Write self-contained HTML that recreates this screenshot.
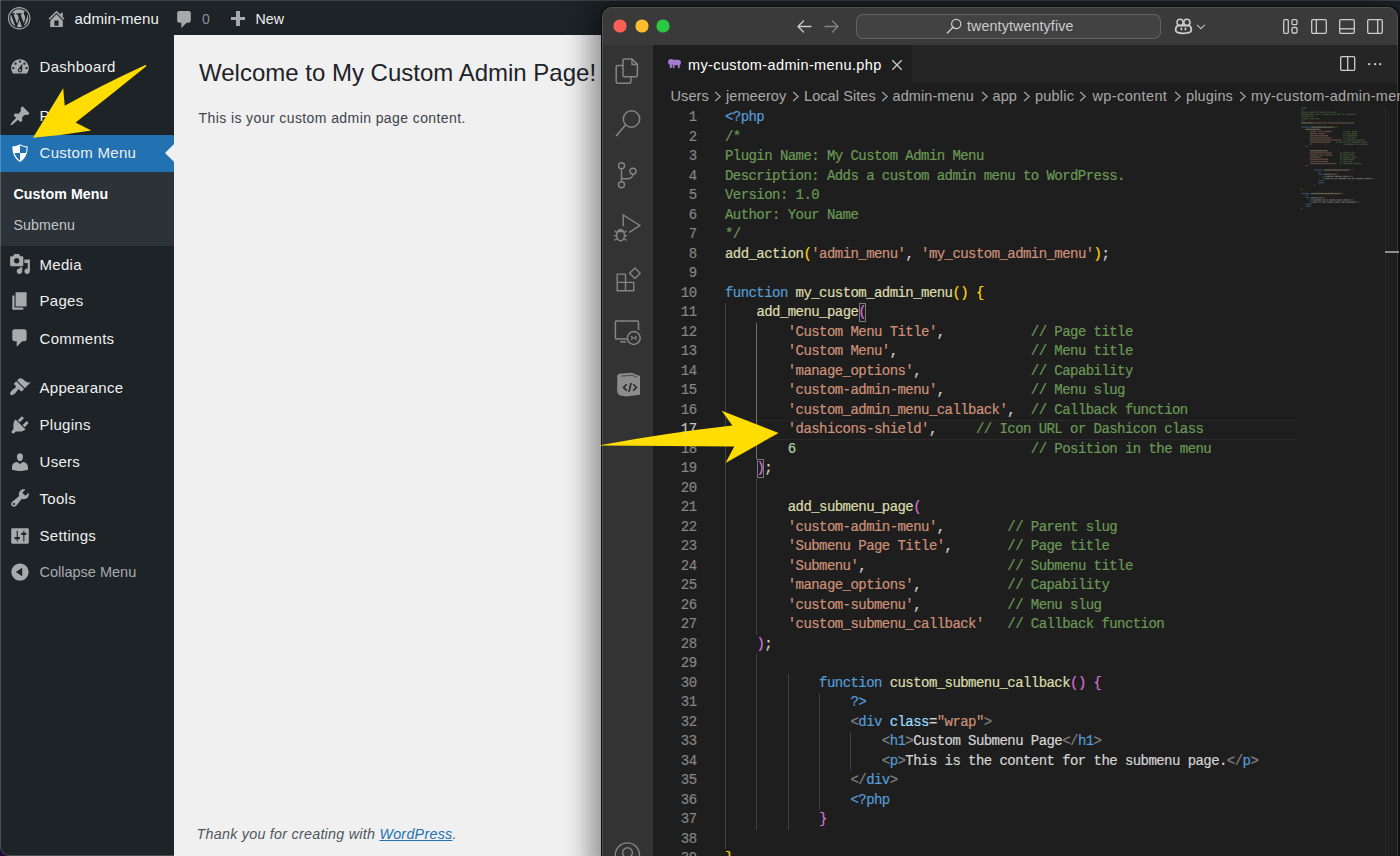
<!DOCTYPE html><html><head><meta charset="utf-8"><style>
*{margin:0;padding:0;box-sizing:border-box}
html,body{width:1400px;height:856px;overflow:hidden;background:#1a0b35;font-family:"Liberation Sans",sans-serif}
.a{position:absolute}
.t{position:absolute;white-space:pre;line-height:1}
svg{position:absolute;overflow:visible}
.code{position:absolute;letter-spacing:-0.56px;-webkit-text-stroke:0.2px currentColor;font-family:"Liberation Mono",monospace;font-size:14px;line-height:19.5px;white-space:pre}
</style></head><body><div class="a" style="left:0;top:0;width:1400px;height:856px;background:#1d2327;border-bottom-left-radius:9px"></div>
<div class="a" style="left:0px;top:0px;width:1400px;height:35px;background:#1d2327;"></div>
<div class="a" style="left:0px;top:0px;width:1400px;height:1px;background:#3d4146;"></div>
<div class="a" style="left:174px;top:35px;width:1226px;height:821px;background:#f0f0f1;"></div>
<div class="t" style="left:74.5px;top:11.30px;font-size:15px;color:#f0f0f1;font-family:'Liberation Sans',sans-serif;letter-spacing:0.1px;font-weight:normal;font-style:normal;">admin-menu</div>
<div class="t" style="left:202px;top:11.75px;font-size:14px;color:#8c8f94;font-family:'Liberation Sans',sans-serif;letter-spacing:0px;font-weight:normal;font-style:normal;">0</div>
<div class="t" style="left:255.5px;top:11.58px;font-size:14.2px;color:#f0f0f1;font-family:'Liberation Sans',sans-serif;letter-spacing:0px;font-weight:normal;font-style:normal;">New</div>
<div class="a" style="left:0px;top:135px;width:174px;height:37px;background:#2271b1;"></div>
<div class="a" style="left:0px;top:172px;width:174px;height:74px;background:#2c3338;"></div>
<svg style="left:165px;top:144.3px" width="9" height="17.8" viewBox="0 0 9 17.8"><path d="M9 0 L0 8.9 L9 17.8Z" fill="#f0f0f1"/></svg>
<div class="t" style="left:39.5px;top:58.80px;font-size:15px;color:#f0f0f1;font-family:'Liberation Sans',sans-serif;letter-spacing:0.3px;font-weight:normal;font-style:normal;">Dashboard</div>
<div class="t" style="left:39.5px;top:108.30px;font-size:15px;color:#f0f0f1;font-family:'Liberation Sans',sans-serif;letter-spacing:0.3px;font-weight:normal;font-style:normal;">Posts</div>
<div class="t" style="left:39.5px;top:145.30px;font-size:15px;color:#f0f0f1;font-family:'Liberation Sans',sans-serif;letter-spacing:0.3px;font-weight:normal;font-style:normal;">Custom Menu</div>
<div class="t" style="left:39.5px;top:256.55px;font-size:15px;color:#f0f0f1;font-family:'Liberation Sans',sans-serif;letter-spacing:0.3px;font-weight:normal;font-style:normal;">Media</div>
<div class="t" style="left:39.5px;top:293.30px;font-size:15px;color:#f0f0f1;font-family:'Liberation Sans',sans-serif;letter-spacing:0.3px;font-weight:normal;font-style:normal;">Pages</div>
<div class="t" style="left:39.5px;top:330.55px;font-size:15px;color:#f0f0f1;font-family:'Liberation Sans',sans-serif;letter-spacing:0.3px;font-weight:normal;font-style:normal;">Comments</div>
<div class="t" style="left:39.5px;top:379.55px;font-size:15px;color:#f0f0f1;font-family:'Liberation Sans',sans-serif;letter-spacing:0.3px;font-weight:normal;font-style:normal;">Appearance</div>
<div class="t" style="left:39.5px;top:416.80px;font-size:15px;color:#f0f0f1;font-family:'Liberation Sans',sans-serif;letter-spacing:0.3px;font-weight:normal;font-style:normal;">Plugins</div>
<div class="t" style="left:39.5px;top:453.80px;font-size:15px;color:#f0f0f1;font-family:'Liberation Sans',sans-serif;letter-spacing:0.3px;font-weight:normal;font-style:normal;">Users</div>
<div class="t" style="left:39.5px;top:490.55px;font-size:15px;color:#f0f0f1;font-family:'Liberation Sans',sans-serif;letter-spacing:0.3px;font-weight:normal;font-style:normal;">Tools</div>
<div class="t" style="left:39.5px;top:528.05px;font-size:15px;color:#f0f0f1;font-family:'Liberation Sans',sans-serif;letter-spacing:0.3px;font-weight:normal;font-style:normal;">Settings</div>
<div class="t" style="left:39.5px;top:565.03px;font-size:14.5px;color:#a7aaad;font-family:'Liberation Sans',sans-serif;letter-spacing:0px;font-weight:normal;font-style:normal;">Collapse Menu</div>
<div class="t" style="left:13.5px;top:186.78px;font-size:14.2px;color:#ffffff;font-family:'Liberation Sans',sans-serif;letter-spacing:0.1px;font-weight:bold;font-style:normal;">Custom Menu</div>
<div class="t" style="left:13.5px;top:218.28px;font-size:14.2px;color:#c3c4c7;font-family:'Liberation Sans',sans-serif;letter-spacing:0.1px;font-weight:normal;font-style:normal;">Submenu</div>
<svg style="left:8.8px;top:55.5px" width="22.00" height="22.00" viewBox="0 0 20 20"><path fill="#a7aaad" fill-rule="evenodd" d="M3.76 16h12.48c1.1-1.37 1.76-3.11 1.76-5 0-4.42-3.58-8-8-8s-8 3.58-8 8c0 1.89.66 3.63 1.76 5zM10 4c.55 0 1 .45 1 1s-.45 1-1 1-1-.45-1-1 .45-1 1-1zM6 6c.55 0 1 .45 1 1s-.45 1-1 1-1-.45-1-1 .45-1 1-1zm8 0c.55 0 1 .45 1 1s-.45 1-1 1-1-.45-1-1 .45-1 1-1zm-5.37 5.55L12 7v6c0 1.1-.9 2-2 2s-2-.9-2-2c0-.57.24-1.08.63-1.45zM4 10c.55 0 1 .45 1 1s-.45 1-1 1-1-.45-1-1 .45-1 1-1zm12 0c.55 0 1 .45 1 1s-.45 1-1 1-1-.45-1-1 .45-1 1-1zm-5 3c0-.55-.45-1-1-1s-1 .45-1 1 .45 1 1 1 1-.45 1-1z"/></svg>
<svg style="left:8.8px;top:105px" width="22.00" height="22.00" viewBox="0 0 20 20"><path fill="#a7aaad" fill-rule="evenodd" d="M10.44 3.02l1.82-1.82 6.36 6.35-1.83 1.82c-1.05-.68-2.48-.57-3.41.36l-.75.75c-.92.93-1.04 2.350-.35 3.41l-1.83 1.82-2.41-2.41-2.8 2.79c-.42.42-3.38 2.71-3.8 2.290s1.86-3.39 2.28-3.810l2.79-2.79L4.1 9.36l1.83-1.82c1.05.69 2.48.57 3.4-.36l.75-.75c.93-.92 1.05-2.35.36-3.41z"/></svg>
<svg style="left:8.8px;top:253.25px" width="22.00" height="22.00" viewBox="0 0 20 20"><path fill="#a7aaad" fill-rule="evenodd" d="M13 11V4c0-.55-.45-1-1-1h-1.67L9 1H5L3.67 3H2c-.55 0-1 .45-1 1v7c0 .55.45 1 1 1h10c.55 0 1-.45 1-1zM7 4.5c1.38 0 2.5 1.12 2.5 2.5S8.38 9.5 7 9.5 4.5 8.38 4.5 7 5.620 4.5 7 4.5zM14 6h5v10.5c0 1.38-1.12 2.5-2.5 2.5S14 17.88 14 16.5s1.12-2.5 2.5-2.5c.17 0 .34.02.5.05V9h-3V6zm-4 8.05V13h2v3.5c0 1.38-1.12 2.5-2.5 2.5S7 17.88 7 16.5 8.12 14 9.5 14c.17 0 .34.02.5.05z"/></svg>
<svg style="left:8.8px;top:290px" width="22.00" height="22.00" viewBox="0 0 20 20"><path fill="#a7aaad" fill-rule="evenodd" d="M6 15V2h10v13H6zm-1 1h8v2H3V5h2v11z"/></svg>
<svg style="left:8.8px;top:327.25px" width="22.00" height="22.00" viewBox="0 0 20 20"><path fill="#a7aaad" fill-rule="evenodd" d="M5 2h9c1.1 0 2 .9 2 2v7c0 1.1-.9 2-2 2h-2l-5 5v-5H5c-1.1 0-2-.9-2-2V4c0-1.1.9-2 2-2z"/></svg>
<svg style="left:8.8px;top:376.25px" width="22.00" height="22.00" viewBox="0 0 20 20"><path fill="#a7aaad" fill-rule="evenodd" d="M14.48 11.06L7.41 3.99l1.5-1.5c.5-.56 2.3-.47 3.51.32 1.21.8 1.430 1.28 2.91 2.1 1.18.64 2.45 1.26 4.45.85zm-.71.71L6.7 4.7 4.93 6.47c-.39.39-.39 1.02 0 1.41l1.06 1.06c.39.39.39 1.03 0 1.42-.6.6-1.43 1.11-2.21 1.69-.35.26-.7.53-1.01.84C1.43 14.23.4 16.08 1.4 17.07c.99 1 2.84-.03 4.18-1.36.31-.31.58-.66.85-1.02.57-.78 1.08-1.61 1.69-2.21.39-.39 1.02-.39 1.41 0l1.06 1.06c.39.39 1.02.39 1.41 0z"/></svg>
<svg style="left:8.8px;top:413.5px" width="22.00" height="22.00" viewBox="0 0 20 20"><path fill="#a7aaad" fill-rule="evenodd" d="M13.11 4.36L9.87 7.6 8 5.73l3.24-3.24c.35-.34 1.05-.2 1.56.32.52.51.66 1.21.31 1.55zm-8 1.77l.91-1.12 9.01 9.01-1.19.84c-.71.71-2.63 1.16-3.82 1.16H6.14L4.9 17.26c-.59.59-1.54.59-2.12 0-.59-.58-.59-1.53 0-2.12l1.24-1.24v-3.88c0-1.13.4-3.19 1.09-3.890zm7.26 3.97l3.24-3.24c.34-.35 1.04-.21 1.55.31.52.51.66 1.21.31 1.55l-3.24 3.25z"/></svg>
<svg style="left:8.8px;top:450.5px" width="22.00" height="22.00" viewBox="0 0 20 20"><path fill="#a7aaad" fill-rule="evenodd" d="M10 9.25c-2.27 0-2.73-3.44-2.73-3.44C7 4.02 7.820 2 9.97 2c2.16 0 2.98 2.02 2.71 3.81 0 0-.41 3.44-2.68 3.44zm0 2.57L12.72 10c2.39 0 4.52 2.33 4.52 4.53v2.49s-3.65 1.13-7.24 1.13c-3.65 0-7.24-1.13-7.24-1.13v-2.49c0-2.25 1.94-4.48 4.47-4.48z"/></svg>
<svg style="left:8.8px;top:487.25px" width="22.00" height="22.00" viewBox="0 0 20 20"><path fill="#a7aaad" fill-rule="evenodd" d="M16.68 9.77c-1.34 1.34-3.3 1.67-4.95.99l-5.41 6.52c-.99.99-2.59.99-3.58 0s-.99-2.59 0-3.57l6.52-5.42c-.68-1.65-.35-3.61.99-4.95 1.28-1.28 3.12-1.62 4.72-1.06l-2.89 2.89 2.82 2.82 2.86-2.87c.53 1.58.18 3.39-1.08 4.650zM3.81 16.21c.4.39 1.04.39 1.43 0 .4-.4.4-1.04 0-1.43-.39-.4-1.03-.4-1.43 0-.39.39-.39 1.03 0 1.43z"/></svg>
<svg style="left:8.8px;top:524.75px" width="22.00" height="22.00" viewBox="0 0 20 20"><path fill="#a7aaad" fill-rule="evenodd" d="M18 16V4c0-.55-.45-1-1-1H3c-.55 0-1 .45-1 1v12c0 .55.45 1 1 1h14c.55 0 1-.45 1-1zM8 11h1c.55 0 1 .45 1 1s-.45 1-1 1H8v1.5c0 .28-.22.5-.5.5s-.5-.22-.5-.5V13H6c-.55 0-1-.45-1-1s.45-1 1-1h1V5.5c0-.28.22-.5.5-.5s.5.22.5.5V11zm5-2h-1c-.55 0-1-.45-1-1s.45-1 1-1h1V5.5c0-.28.22-.5.5-.5s.5.22.5.5V7h1c.55 0 1 .45 1 1s-.45 1-1 1h-1v5.5c0 .28-.22.5-.5.5s-.5-.22-.5-.5V9z"/></svg>
<svg style="left:8.8px;top:560.5px" width="22.00" height="22.00" viewBox="0 0 20 20"><path fill="#a7aaad" fill-rule="evenodd" d="M10 2.16c4.33 0 7.84 3.51 7.84 7.84S14.33 17.84 10 17.84 2.16 14.33 2.16 10 5.710 2.16 10 2.16zm2 11.72V6.12L6.18 9.97z"/></svg>
<svg style="left:8.8px;top:142.4px" width="22.00" height="22.00" viewBox="0 0 20 20"><path fill="#ffffff" fill-rule="evenodd" d="M10 2s3 2 7 2c0 11-7 14-7 14S3 15 3 4c4 0 7-2 7-2zm0 8h5s1-1 1-5c0 0-5-1-6-2v7zm-5 0c1 4 5 7 5 7v-7H5z"/></svg>
<svg style="left:46.2px;top:7.5px" width="21.00" height="21.00" viewBox="0 0 20 20"><path fill="#a7aaad" fill-rule="evenodd" d="M16 8.5l1.53 1.53-1.06 1.06L10 4.62l-6.47 6.47-1.06-1.06L10 2.5l4 4v-2h2v4zm-6-2.46l6 5.99V18H4v-5.97zM12 17v-5H8v5h4z"/></svg>
<svg style="left:173.6px;top:8.6px" width="21.00" height="21.00" viewBox="0 0 20 20"><path fill="#a7aaad" fill-rule="evenodd" d="M5 2h9c1.1 0 2 .9 2 2v7c0 1.1-.9 2-2 2h-2l-5 5v-5H5c-1.1 0-2-.9-2-2V4c0-1.1.9-2 2-2z"/></svg>
<div class="a" style="left:236.3px;top:11.3px;width:3.5px;height:14.4px;background:#a7aaad;"></div>
<div class="a" style="left:230.9px;top:16.7px;width:14.2px;height:3.5px;background:#a7aaad;"></div>
<svg style="left:7.5px;top:6.75px" width="22.50" height="22.50" viewBox="0 0 20 20"><path fill="#a7aaad" fill-rule="nonzero" d="M20 10c0-5.52-4.48-10-10-10S0 4.48 0 10s4.48 10 10 10 10-4.48 10-10zM10 1.01c4.96 0 8.99 4.02 8.99 8.99s-4.03 8.99-8.99 8.99S1.01 14.96 1.01 10 5.04 1.01 10 1.01zM8.01 14.82L4.96 6.61c.49-.03 1.05-.08 1.05-.08.43-.05.38-1.01-.06-.99 0 0-1.29.1-2.13.1-.15 0-.33 0-.52-.01 1.44-2.17 3.9-3.6 6.7-3.6 2.09 0 3.99.79 5.410 2.09-.6-.08-1.45.35-1.45 1.49 0 .7.38 1.29.78 1.99.31.55.5 1.22.5 2.21 0 1.34-1.27 4.48-1.27 4.48l-2.71-7.5c.48-.03.75-.16.75-.16.43-.05.38-1.1-.05-1.08 0 0-1.3.11-2.14.11-.78 0-2.11-.11-2.11-.11-.43-.02-.48 1.06-.04 1.08l.84.08 1.12 3.04zm6.02 2.15L16.64 10s.67-1.69.39-3.81c.63 1.14.94 2.42.94 3.81 0 2.96-1.56 5.58-3.94 6.97zM2.68 6.77L6.5 17.25c-2.67-1.3-4.470-4.08-4.47-7.25 0-1.16.2-2.23.65-3.23zm7.45 4.53l2.29 6.25c-.75.27-1.57.42-2.42.42-.72 0-1.41-.11-2.06-.3z"/></svg>
<div class="a" style="left:0;top:0;width:1400px;height:856px;border-left:1.5px solid rgba(255,255,255,0.2);border-bottom:1px solid rgba(255,255,255,0.2);border-bottom-left-radius:9px"></div>
<div class="t" style="left:199px;top:60.68px;font-size:24px;color:#1d2327;font-family:'Liberation Sans',sans-serif;letter-spacing:0px;font-weight:normal;font-style:normal;">Welcome to My Custom Admin Page!</div>
<div class="t" style="left:198.5px;top:110.90px;font-size:14px;color:#3c434a;font-family:'Liberation Sans',sans-serif;letter-spacing:0.41px;font-weight:normal;font-style:normal;">This is your custom admin page content.</div>
<div class="t" style="left:196.5px;top:827.30px;font-size:14.3px;color:#50575e;font-family:'Liberation Sans',sans-serif;letter-spacing:0.26px;font-weight:normal;font-style:italic;">Thank you for creating with <span style="color:#2271b1;text-decoration:underline">WordPress</span>.</div>
<div class="a" style="left:601px;top:6px;width:798.5px;height:900px;border-radius:11px 11px 0 0;box-shadow:-6px 0 28px 4px rgba(0,0,0,.42);background:#0e0e0e"></div>
<div class="a" style="left:602px;top:7px;width:796px;height:900px;border-radius:10px 10px 0 0;background:#1e1e1e;overflow:hidden">
<div class="a" style="left:0px;top:0px;width:800px;height:38px;background:#3a3a3a;"></div>
<div class="a" style="left:0px;top:38px;width:51px;height:820px;background:#333333;"></div>
<div class="a" style="left:51px;top:38px;width:750px;height:38px;background:#252526;"></div>
<div class="a" style="left:51px;top:38px;width:259px;height:38px;background:#1e1e1e;"></div>
</div>
<div class="a" style="left:602px;top:7px;width:796px;height:900px;border-radius:10px 10px 0 0;border:1px solid rgba(255,255,255,0.12)"></div>
<div class="a" style="left:1399.5px;top:0px;width:1px;height:856px;background:#1d2327;"></div>
<svg style="left:612.9px;top:18.5px" width="14" height="14" viewBox="0 0 14 14"><circle cx="7" cy="7" r="6.6" fill="#ff5f57"/></svg>
<svg style="left:634.5px;top:18.5px" width="14" height="14" viewBox="0 0 14 14"><circle cx="7" cy="7" r="6.6" fill="#febc2e"/></svg>
<svg style="left:656.3px;top:18.5px" width="14" height="14" viewBox="0 0 14 14"><circle cx="7" cy="7" r="6.6" fill="#28c840"/></svg>
<svg style="left:796px;top:20px" width="16" height="13" viewBox="0 0 16 13"><path d="M15 6.5H2M7.5 1L2 6.5 7.5 12" fill="none" stroke="#cccccc" stroke-width="1.3" stroke-linecap="round" stroke-linejoin="round"/></svg>
<svg style="left:824px;top:20px" width="16" height="13" viewBox="0 0 16 13"><path d="M1 6.5H14M8.5 1L14 6.5 8.5 12" fill="none" stroke="#858585" stroke-width="1.3" stroke-linecap="round" stroke-linejoin="round"/></svg>
<div class="a" style="left:855.5px;top:13.5px;width:305px;height:25.5px;background:rgba(255,255,255,0.045);border:1px solid rgba(255,255,255,0.17);border-radius:7px"></div>
<svg style="left:946px;top:18px" width="16" height="16" viewBox="0 0 16 16"><circle cx="10.2" cy="6" r="4.6" fill="none" stroke="#cccccc" stroke-width="1.25"/><path d="M7 9.3L1.3 15" stroke="#cccccc" stroke-width="1.3" stroke-linecap="round"/></svg>
<div class="t" style="left:967px;top:18.98px;font-size:14.2px;color:#cccccc;font-family:'Liberation Sans',sans-serif;letter-spacing:0.15px;font-weight:normal;font-style:normal;">twentytwentyfive</div>
<svg style="left:1170px;top:14px" width="40" height="24" viewBox="0 0 40 24"><circle cx="10.1" cy="8.4" r="3.1" fill="none" stroke="#cccccc" stroke-width="1.5"/><circle cx="16.9" cy="8.4" r="3.1" fill="none" stroke="#cccccc" stroke-width="1.5"/><path d="M5.7 16.3Q5.5 12.2 8.6 11.7H18.4Q21.5 12.2 21.3 16.3Q21.2 19.3 13.5 19.3Q5.8 19.3 5.7 16.3Z" fill="none" stroke="#cccccc" stroke-width="1.8"/><ellipse cx="11.4" cy="14.9" rx="0.9" ry="1.7" fill="#cccccc"/><ellipse cx="15.4" cy="14.9" rx="0.9" ry="1.7" fill="#cccccc"/></svg>
<svg style="left:1196px;top:24px" width="10" height="6" viewBox="0 0 10 6"><path d="M1 .8l3.9 3.9 3.9-3.9" fill="none" stroke="#bbbbbb" stroke-width="1.1"/></svg>
<svg style="left:1283px;top:19px" width="16" height="15" viewBox="0 0 16 15"><rect x="0.7" y="0.7" width="4.6" height="13.6" rx="1" fill="none" stroke="#cccccc" stroke-width="1.3"/><rect x="9" y="0.7" width="5" height="5" rx="1.2" fill="none" stroke="#cccccc" stroke-width="1.3"/><rect x="9" y="8.5" width="5" height="5.5" rx="1.2" fill="none" stroke="#cccccc" stroke-width="1.3"/></svg>
<svg style="left:1311px;top:19px" width="16" height="15" viewBox="0 0 16 15"><rect x="0.7" y="0.7" width="14.6" height="13.6" rx="1.2" fill="none" stroke="#cccccc" stroke-width="1.3"/><path d="M5.3 .7v13.6" stroke="#cccccc" stroke-width="1.3"/></svg>
<svg style="left:1339px;top:19px" width="16" height="15" viewBox="0 0 16 15"><rect x="0.7" y="0.7" width="14.6" height="13.6" rx="1.2" fill="none" stroke="#cccccc" stroke-width="1.3"/><path d="M.7 9.8h14.6" stroke="#cccccc" stroke-width="1.3"/></svg>
<svg style="left:1367px;top:19px" width="16" height="15" viewBox="0 0 16 15"><rect x="0.7" y="0.7" width="14.6" height="13.6" rx="1.2" fill="none" stroke="#cccccc" stroke-width="1.3"/><path d="M10.7 .7v13.6" stroke="#cccccc" stroke-width="1.3"/></svg>
<svg style="left:614px;top:57px" width="26" height="28" viewBox="0 0 26 28"><path d="M10.5 2H18L23.4 7.4V18.3A1.5 1.5 0 0 1 21.9 19.8H10.5A1.5 1.5 0 0 1 9 18.3V3.5A1.5 1.5 0 0 1 10.5 2ZM18 2V7.4H23.4" fill="none" stroke="#858585" stroke-width="1.5" stroke-linejoin="round"/><path d="M9 8.5H3.7A1.5 1.5 0 0 0 2.2 10V24.8A1.5 1.5 0 0 0 3.7 26.3H15.4A1.5 1.5 0 0 0 16.9 24.8V19.8" fill="none" stroke="#858585" stroke-width="1.5" stroke-linejoin="round"/></svg>
<svg style="left:614px;top:108px" width="28" height="30" viewBox="0 0 28 30"><circle cx="17.5" cy="11" r="8.2" fill="none" stroke="#858585" stroke-width="1.5"/><path d="M11.5 17L2.5 27.5" stroke="#858585" stroke-width="1.6" stroke-linecap="round"/></svg>
<svg style="left:615px;top:161px" width="26" height="30" viewBox="0 0 26 30"><circle cx="6.5" cy="4.8" r="3" fill="none" stroke="#858585" stroke-width="1.4"/><circle cx="18" cy="10.3" r="3" fill="none" stroke="#858585" stroke-width="1.4"/><circle cx="6.5" cy="23.7" r="3" fill="none" stroke="#858585" stroke-width="1.4"/><path d="M6.5 7.8v12.9M18 13.3c0 3-3 4.5-6 4.5H6.5" fill="none" stroke="#858585" stroke-width="1.4"/></svg>
<svg style="left:608px;top:208px" width="36" height="36" viewBox="0 0 36 36"><path d="M15.2 18.2V7L31.8 17.5 21.3 24.3" fill="none" stroke="#858585" stroke-width="1.4" stroke-linejoin="miter"/><ellipse cx="12.6" cy="27.6" rx="3.9" ry="5.1" fill="none" stroke="#858585" stroke-width="1.4"/><path d="M8.9 23.6H16.3M9.6 23.3Q12.6 19.6 15.6 23.3M8.8 24.8L6.6 22.6M8.7 27.6H6M8.8 30.6L6.6 32.6M16.4 24.8L18.6 22.6M16.5 27.6H19.2M16.4 30.6L18.6 32.6" fill="none" stroke="#858585" stroke-width="1.3"/></svg>
<svg style="left:615px;top:262px" width="28" height="32" viewBox="0 0 28 32"><path d="M2.2 12.1h8.3v8.3H2.2zM2.2 20.4h8.3v8.3H2.2zM10.5 20.4h8.3v8.3h-8.3z" fill="none" stroke="#858585" stroke-width="1.4" stroke-linejoin="round"/><path d="M14.6 11.2l5.3-5.3 5.3 5.3-5.3 5.3z" fill="none" stroke="#858585" stroke-width="1.4" stroke-linejoin="round"/></svg>
<svg style="left:613px;top:319px" width="30" height="28" viewBox="0 0 30 28"><path d="M14.5 20H3.4A1 1 0 0 1 2.4 19V3A1 1 0 0 1 3.4 2H24.5A1 1 0 0 1 25.5 3V11" fill="none" stroke="#858585" stroke-width="1.5"/><path d="M7.1 22.8h6" stroke="#858585" stroke-width="1.5"/><circle cx="20.8" cy="19" r="6.4" fill="#333333" stroke="#858585" stroke-width="1.5"/><path d="M18 17.3l2 1.7-2 1.7M23.6 17.3l-2 1.7 2 1.7" fill="none" stroke="#858585" stroke-width="1.2"/></svg>
<svg style="left:616px;top:372px" width="26" height="28" viewBox="0 0 26 28"><path d="M1.2 3.8L3 1.8 15.5 .8 24 4V22.8L10 24.6 3.2 23.2 1.2 20z" fill="#8c8c8c"/><path d="M5 4.2L16 3.2 21 5.2" fill="none" stroke="#555555" stroke-width="1.2"/><path d="M10.8 12.2l-3.3 3.2 3.3 3.2M17.2 12.2l3.3 3.2-3.3 3.2M15.1 11l-2.2 9" fill="none" stroke="#2a2a2a" stroke-width="1.6"/></svg>
<svg style="left:613px;top:840px" width="30" height="30" viewBox="0 0 30 30"><circle cx="14.4" cy="15" r="12.1" fill="none" stroke="#858585" stroke-width="1.4"/><circle cx="14.5" cy="12.7" r="4.9" fill="none" stroke="#858585" stroke-width="1.4"/></svg>
<svg style="left:664px;top:55px" width="22" height="18" viewBox="0 0 22 18"><g fill="#a47bd0"><ellipse cx="7.2" cy="6.9" rx="3.2" ry="2.9"/><rect x="8.5" y="4.7" width="8.4" height="5.6" rx="2.6"/><rect x="5.8" y="8" width="2.1" height="5.2" rx="1"/><rect x="8.7" y="9" width="1.8" height="4.3" rx="0.8"/><rect x="13.9" y="9" width="1.8" height="4.3" rx="0.8"/></g></svg>
<div class="t" style="left:688px;top:57.93px;font-size:14.5px;color:#ffffff;font-family:'Liberation Sans',sans-serif;letter-spacing:0.38px;font-weight:normal;font-style:normal;">my-custom-admin-menu.php</div>
<svg style="left:891px;top:59px" width="12" height="12" viewBox="0 0 12 12"><path d="M1.3 1.3l9.4 9.4M10.7 1.3l-9.4 9.4" stroke="#cccccc" stroke-width="1.25"/></svg>
<svg style="left:1340px;top:56px" width="16" height="15" viewBox="0 0 16 15"><rect x="0.7" y="0.7" width="14" height="13.6" rx="1.2" fill="none" stroke="#cccccc" stroke-width="1.3"/><path d="M7.7 .7v13.6" stroke="#cccccc" stroke-width="1.3"/></svg>
<svg style="left:1368.3px;top:63px" width="2.4" height="2.4" viewBox="0 0 2.4 2.4"><circle cx="1.2" cy="1.2" r="1.15" fill="#cccccc"/></svg>
<svg style="left:1373.8px;top:63px" width="2.4" height="2.4" viewBox="0 0 2.4 2.4"><circle cx="1.2" cy="1.2" r="1.15" fill="#cccccc"/></svg>
<svg style="left:1379.3px;top:63px" width="2.4" height="2.4" viewBox="0 0 2.4 2.4"><circle cx="1.2" cy="1.2" r="1.15" fill="#cccccc"/></svg>
<div class="t" style="left:670.5px;top:88.63px;font-size:14.5px;color:#a9a9a9;font-family:'Liberation Sans',sans-serif;letter-spacing:0.08px;font-weight:normal;font-style:normal;">Users</div>
<div class="t" style="left:726px;top:88.63px;font-size:14.5px;color:#a9a9a9;font-family:'Liberation Sans',sans-serif;letter-spacing:0.08px;font-weight:normal;font-style:normal;">jemeeroy</div>
<div class="t" style="left:804px;top:88.63px;font-size:14.5px;color:#a9a9a9;font-family:'Liberation Sans',sans-serif;letter-spacing:0.08px;font-weight:normal;font-style:normal;">Local Sites</div>
<div class="t" style="left:892.5px;top:88.63px;font-size:14.5px;color:#a9a9a9;font-family:'Liberation Sans',sans-serif;letter-spacing:0.08px;font-weight:normal;font-style:normal;">admin-menu</div>
<div class="t" style="left:992.5px;top:88.63px;font-size:14.5px;color:#a9a9a9;font-family:'Liberation Sans',sans-serif;letter-spacing:0.08px;font-weight:normal;font-style:normal;">app</div>
<div class="t" style="left:1035px;top:88.63px;font-size:14.5px;color:#a9a9a9;font-family:'Liberation Sans',sans-serif;letter-spacing:0.2px;font-weight:normal;font-style:normal;">public</div>
<div class="t" style="left:1092.5px;top:88.63px;font-size:14.5px;color:#a9a9a9;font-family:'Liberation Sans',sans-serif;letter-spacing:0.38px;font-weight:normal;font-style:normal;">wp-content</div>
<div class="t" style="left:1186px;top:88.63px;font-size:14.5px;color:#a9a9a9;font-family:'Liberation Sans',sans-serif;letter-spacing:0.15px;font-weight:normal;font-style:normal;">plugins</div>
<div class="t" style="left:1251px;top:88.63px;font-size:14.5px;color:#a9a9a9;font-family:'Liberation Sans',sans-serif;letter-spacing:0.3px;font-weight:normal;font-style:normal;">my-custom-admin-menu.php</div>
<svg style="left:713.8000000000001px;top:90.5px" width="8" height="11" viewBox="0 0 8 11"><path d="M1.2 1l5 4.5-5 4.5" fill="none" stroke="#a9a9a9" stroke-width="1.1"/></svg>
<svg style="left:791.7px;top:90.5px" width="8" height="11" viewBox="0 0 8 11"><path d="M1.2 1l5 4.5-5 4.5" fill="none" stroke="#a9a9a9" stroke-width="1.1"/></svg>
<svg style="left:880.6px;top:90.5px" width="8" height="11" viewBox="0 0 8 11"><path d="M1.2 1l5 4.5-5 4.5" fill="none" stroke="#a9a9a9" stroke-width="1.1"/></svg>
<svg style="left:981.2px;top:90.5px" width="8" height="11" viewBox="0 0 8 11"><path d="M1.2 1l5 4.5-5 4.5" fill="none" stroke="#a9a9a9" stroke-width="1.1"/></svg>
<svg style="left:1022.9000000000001px;top:90.5px" width="8" height="11" viewBox="0 0 8 11"><path d="M1.2 1l5 4.5-5 4.5" fill="none" stroke="#a9a9a9" stroke-width="1.1"/></svg>
<svg style="left:1079.2px;top:90.5px" width="8" height="11" viewBox="0 0 8 11"><path d="M1.2 1l5 4.5-5 4.5" fill="none" stroke="#a9a9a9" stroke-width="1.1"/></svg>
<svg style="left:1174.2px;top:90.5px" width="8" height="11" viewBox="0 0 8 11"><path d="M1.2 1l5 4.5-5 4.5" fill="none" stroke="#a9a9a9" stroke-width="1.1"/></svg>
<svg style="left:1239.2px;top:90.5px" width="8" height="11" viewBox="0 0 8 11"><path d="M1.2 1l5 4.5-5 4.5" fill="none" stroke="#a9a9a9" stroke-width="1.1"/></svg>
<div class="a" style="left:725px;top:419.5px;width:572px;height:1.5px;background:#292929;"></div>
<div class="a" style="left:725px;top:438.5px;width:572px;height:1.5px;background:#292929;"></div>
<div class="a" style="left:724.8px;top:303.0px;width:1px;height:546.0px;background:#404040;"></div>
<div class="a" style="left:756.2px;top:322.5px;width:1px;height:136.5px;background:#707070;"></div>
<div class="a" style="left:756.2px;top:478.5px;width:1px;height:156.0px;background:#404040;"></div>
<div class="a" style="left:756.2px;top:654.0px;width:1px;height:175.5px;background:#404040;"></div>
<div class="a" style="left:787.5px;top:673.5px;width:1px;height:156.0px;background:#404040;"></div>
<div class="a" style="left:818.9px;top:693.0px;width:1px;height:117.0px;background:#404040;"></div>
<div class="a" style="left:850.2px;top:732.0px;width:1px;height:39.0px;background:#404040;"></div>
<div class="a" style="left:858.78px;top:303.3px;width:7.6px;height:19px;background:transparent;border:1px solid #7a7a7a"></div>
<div class="a" style="left:756.86px;top:459.3px;width:7.6px;height:19px;background:transparent;border:1px solid #7a7a7a"></div>
<div class="code" style="left:650px;top:108.00px;width:46.5px;text-align:right;color:#858585">1</div>
<div class="code" style="left:650px;top:127.50px;width:46.5px;text-align:right;color:#858585">2</div>
<div class="code" style="left:650px;top:147.00px;width:46.5px;text-align:right;color:#858585">3</div>
<div class="code" style="left:650px;top:166.50px;width:46.5px;text-align:right;color:#858585">4</div>
<div class="code" style="left:650px;top:186.00px;width:46.5px;text-align:right;color:#858585">5</div>
<div class="code" style="left:650px;top:205.50px;width:46.5px;text-align:right;color:#858585">6</div>
<div class="code" style="left:650px;top:225.00px;width:46.5px;text-align:right;color:#858585">7</div>
<div class="code" style="left:650px;top:244.50px;width:46.5px;text-align:right;color:#858585">8</div>
<div class="code" style="left:650px;top:264.00px;width:46.5px;text-align:right;color:#858585">9</div>
<div class="code" style="left:650px;top:283.50px;width:46.5px;text-align:right;color:#858585">10</div>
<div class="code" style="left:650px;top:303.00px;width:46.5px;text-align:right;color:#858585">11</div>
<div class="code" style="left:650px;top:322.50px;width:46.5px;text-align:right;color:#858585">12</div>
<div class="code" style="left:650px;top:342.00px;width:46.5px;text-align:right;color:#858585">13</div>
<div class="code" style="left:650px;top:361.50px;width:46.5px;text-align:right;color:#858585">14</div>
<div class="code" style="left:650px;top:381.00px;width:46.5px;text-align:right;color:#858585">15</div>
<div class="code" style="left:650px;top:400.50px;width:46.5px;text-align:right;color:#858585">16</div>
<div class="code" style="left:650px;top:420.00px;width:46.5px;text-align:right;color:#c6c6c6">17</div>
<div class="code" style="left:650px;top:439.50px;width:46.5px;text-align:right;color:#858585">18</div>
<div class="code" style="left:650px;top:459.00px;width:46.5px;text-align:right;color:#858585">19</div>
<div class="code" style="left:650px;top:478.50px;width:46.5px;text-align:right;color:#858585">20</div>
<div class="code" style="left:650px;top:498.00px;width:46.5px;text-align:right;color:#858585">21</div>
<div class="code" style="left:650px;top:517.50px;width:46.5px;text-align:right;color:#858585">22</div>
<div class="code" style="left:650px;top:537.00px;width:46.5px;text-align:right;color:#858585">23</div>
<div class="code" style="left:650px;top:556.50px;width:46.5px;text-align:right;color:#858585">24</div>
<div class="code" style="left:650px;top:576.00px;width:46.5px;text-align:right;color:#858585">25</div>
<div class="code" style="left:650px;top:595.50px;width:46.5px;text-align:right;color:#858585">26</div>
<div class="code" style="left:650px;top:615.00px;width:46.5px;text-align:right;color:#858585">27</div>
<div class="code" style="left:650px;top:634.50px;width:46.5px;text-align:right;color:#858585">28</div>
<div class="code" style="left:650px;top:654.00px;width:46.5px;text-align:right;color:#858585">29</div>
<div class="code" style="left:650px;top:673.50px;width:46.5px;text-align:right;color:#858585">30</div>
<div class="code" style="left:650px;top:693.00px;width:46.5px;text-align:right;color:#858585">31</div>
<div class="code" style="left:650px;top:712.50px;width:46.5px;text-align:right;color:#858585">32</div>
<div class="code" style="left:650px;top:732.00px;width:46.5px;text-align:right;color:#858585">33</div>
<div class="code" style="left:650px;top:751.50px;width:46.5px;text-align:right;color:#858585">34</div>
<div class="code" style="left:650px;top:771.00px;width:46.5px;text-align:right;color:#858585">35</div>
<div class="code" style="left:650px;top:790.50px;width:46.5px;text-align:right;color:#858585">36</div>
<div class="code" style="left:650px;top:810.00px;width:46.5px;text-align:right;color:#858585">37</div>
<div class="code" style="left:650px;top:829.50px;width:46.5px;text-align:right;color:#858585">38</div>
<div class="code" style="left:650px;top:849.00px;width:46.5px;text-align:right;color:#858585">39</div>
<div class="code" style="left:725px;top:108.00px"><span style="color:#569cd6">&lt;?php</span></div>
<div class="code" style="left:725px;top:127.50px"><span style="color:#6a9955">/*</span></div>
<div class="code" style="left:725px;top:147.00px"><span style="color:#6a9955">Plugin Name: My Custom Admin Menu</span></div>
<div class="code" style="left:725px;top:166.50px"><span style="color:#6a9955">Description: Adds a custom admin menu to WordPress.</span></div>
<div class="code" style="left:725px;top:186.00px"><span style="color:#6a9955">Version: 1.0</span></div>
<div class="code" style="left:725px;top:205.50px"><span style="color:#6a9955">Author: Your Name</span></div>
<div class="code" style="left:725px;top:225.00px"><span style="color:#6a9955">*/</span></div>
<div class="code" style="left:725px;top:244.50px"><span style="color:#dcdcaa">add_action</span><span style="color:#ffd700">(</span><span style="color:#ce9178">&#x27;admin_menu&#x27;</span><span style="color:#d4d4d4">, </span><span style="color:#ce9178">&#x27;my_custom_admin_menu&#x27;</span><span style="color:#ffd700">)</span><span style="color:#d4d4d4">;</span></div>
<div class="code" style="left:725px;top:264.00px"></div>
<div class="code" style="left:725px;top:283.50px"><span style="color:#569cd6">function</span><span style="color:#d4d4d4"> </span><span style="color:#dcdcaa">my_custom_admin_menu</span><span style="color:#ffd700">()</span><span style="color:#d4d4d4"> </span><span style="color:#ffd700">{</span></div>
<div class="code" style="left:725px;top:303.00px"><span style="color:#d4d4d4">    </span><span style="color:#dcdcaa">add_menu_page</span><span style="color:#da70d6">(</span></div>
<div class="code" style="left:725px;top:322.50px"><span style="color:#d4d4d4">        </span><span style="color:#ce9178">&#x27;Custom Menu Title&#x27;</span><span style="color:#d4d4d4">,</span><span style="color:#d4d4d4">           </span><span style="color:#6a9955">// Page title</span></div>
<div class="code" style="left:725px;top:342.00px"><span style="color:#d4d4d4">        </span><span style="color:#ce9178">&#x27;Custom Menu&#x27;</span><span style="color:#d4d4d4">,</span><span style="color:#d4d4d4">                 </span><span style="color:#6a9955">// Menu title</span></div>
<div class="code" style="left:725px;top:361.50px"><span style="color:#d4d4d4">        </span><span style="color:#ce9178">&#x27;manage_options&#x27;</span><span style="color:#d4d4d4">,</span><span style="color:#d4d4d4">              </span><span style="color:#6a9955">// Capability</span></div>
<div class="code" style="left:725px;top:381.00px"><span style="color:#d4d4d4">        </span><span style="color:#ce9178">&#x27;custom-admin-menu&#x27;</span><span style="color:#d4d4d4">,</span><span style="color:#d4d4d4">           </span><span style="color:#6a9955">// Menu slug</span></div>
<div class="code" style="left:725px;top:400.50px"><span style="color:#d4d4d4">        </span><span style="color:#ce9178">&#x27;custom_admin_menu_callback&#x27;</span><span style="color:#d4d4d4">,</span><span style="color:#d4d4d4">  </span><span style="color:#6a9955">// Callback function</span></div>
<div class="code" style="left:725px;top:420.00px"><span style="color:#d4d4d4">        </span><span style="color:#ce9178">&#x27;dashicons-shield&#x27;</span><span style="color:#d4d4d4">,</span><span style="color:#d4d4d4">     </span><span style="color:#6a9955">// Icon URL or Dashicon class</span></div>
<div class="code" style="left:725px;top:439.50px"><span style="color:#d4d4d4">        </span><span style="color:#b5cea8">6</span><span style="color:#d4d4d4">                              </span><span style="color:#6a9955">// Position in the menu</span></div>
<div class="code" style="left:725px;top:459.00px"><span style="color:#d4d4d4">    </span><span style="color:#da70d6">)</span><span style="color:#d4d4d4">;</span></div>
<div class="code" style="left:725px;top:478.50px"></div>
<div class="code" style="left:725px;top:498.00px"><span style="color:#d4d4d4">        </span><span style="color:#dcdcaa">add_submenu_page</span><span style="color:#da70d6">(</span></div>
<div class="code" style="left:725px;top:517.50px"><span style="color:#d4d4d4">        </span><span style="color:#ce9178">&#x27;custom-admin-menu&#x27;</span><span style="color:#d4d4d4">,</span><span style="color:#d4d4d4">        </span><span style="color:#6a9955">// Parent slug</span></div>
<div class="code" style="left:725px;top:537.00px"><span style="color:#d4d4d4">        </span><span style="color:#ce9178">&#x27;Submenu Page Title&#x27;</span><span style="color:#d4d4d4">,</span><span style="color:#d4d4d4">       </span><span style="color:#6a9955">// Page title</span></div>
<div class="code" style="left:725px;top:556.50px"><span style="color:#d4d4d4">        </span><span style="color:#ce9178">&#x27;Submenu&#x27;</span><span style="color:#d4d4d4">,</span><span style="color:#d4d4d4">                  </span><span style="color:#6a9955">// Submenu title</span></div>
<div class="code" style="left:725px;top:576.00px"><span style="color:#d4d4d4">        </span><span style="color:#ce9178">&#x27;manage_options&#x27;</span><span style="color:#d4d4d4">,</span><span style="color:#d4d4d4">           </span><span style="color:#6a9955">// Capability</span></div>
<div class="code" style="left:725px;top:595.50px"><span style="color:#d4d4d4">        </span><span style="color:#ce9178">&#x27;custom-submenu&#x27;</span><span style="color:#d4d4d4">,</span><span style="color:#d4d4d4">           </span><span style="color:#6a9955">// Menu slug</span></div>
<div class="code" style="left:725px;top:615.00px"><span style="color:#d4d4d4">        </span><span style="color:#ce9178">&#x27;custom_submenu_callback&#x27;</span><span style="color:#d4d4d4">   </span><span style="color:#6a9955">// Callback function</span></div>
<div class="code" style="left:725px;top:634.50px"><span style="color:#d4d4d4">    </span><span style="color:#da70d6">)</span><span style="color:#d4d4d4">;</span></div>
<div class="code" style="left:725px;top:654.00px"></div>
<div class="code" style="left:725px;top:673.50px"><span style="color:#d4d4d4">            </span><span style="color:#569cd6">function</span><span style="color:#d4d4d4"> </span><span style="color:#dcdcaa">custom_submenu_callback</span><span style="color:#da70d6">()</span><span style="color:#d4d4d4"> </span><span style="color:#da70d6">{</span></div>
<div class="code" style="left:725px;top:693.00px"><span style="color:#d4d4d4">                </span><span style="color:#569cd6">?&gt;</span></div>
<div class="code" style="left:725px;top:712.50px"><span style="color:#d4d4d4">                </span><span style="color:#808080">&lt;</span><span style="color:#569cd6">div</span><span style="color:#d4d4d4"> </span><span style="color:#9cdcfe">class</span><span style="color:#d4d4d4">=</span><span style="color:#ce9178">&quot;wrap&quot;</span><span style="color:#808080">&gt;</span></div>
<div class="code" style="left:725px;top:732.00px"><span style="color:#d4d4d4">                    </span><span style="color:#808080">&lt;</span><span style="color:#569cd6">h1</span><span style="color:#808080">&gt;</span><span style="color:#d4d4d4">Custom Submenu Page</span><span style="color:#808080">&lt;/</span><span style="color:#569cd6">h1</span><span style="color:#808080">&gt;</span></div>
<div class="code" style="left:725px;top:751.50px"><span style="color:#d4d4d4">                    </span><span style="color:#808080">&lt;</span><span style="color:#569cd6">p</span><span style="color:#808080">&gt;</span><span style="color:#d4d4d4">This is the content for the submenu page.</span><span style="color:#808080">&lt;/</span><span style="color:#569cd6">p</span><span style="color:#808080">&gt;</span></div>
<div class="code" style="left:725px;top:771.00px"><span style="color:#d4d4d4">                </span><span style="color:#808080">&lt;/</span><span style="color:#569cd6">div</span><span style="color:#808080">&gt;</span></div>
<div class="code" style="left:725px;top:790.50px"><span style="color:#d4d4d4">                </span><span style="color:#569cd6">&lt;?php</span></div>
<div class="code" style="left:725px;top:810.00px"><span style="color:#d4d4d4">            </span><span style="color:#da70d6">}</span></div>
<div class="code" style="left:725px;top:829.50px"></div>
<div class="code" style="left:725px;top:849.00px"><span style="color:#ffd700">}</span></div>
<svg style="left:1300px;top:100px" width="100" height="120" viewBox="0 0 100 120"><g opacity="0.34"><rect x="1.20" y="7.30" width="5.38" height="1.3" fill="#569cd6"/><rect x="1.20" y="9.44" width="2.15" height="1.3" fill="#6a9955"/><rect x="1.20" y="11.58" width="6.45" height="1.3" fill="#6a9955"/><rect x="8.73" y="11.58" width="5.38" height="1.3" fill="#6a9955"/><rect x="15.17" y="11.58" width="2.15" height="1.3" fill="#6a9955"/><rect x="18.40" y="11.58" width="6.45" height="1.3" fill="#6a9955"/><rect x="25.92" y="11.58" width="5.38" height="1.3" fill="#6a9955"/><rect x="32.38" y="11.58" width="4.30" height="1.3" fill="#6a9955"/><rect x="1.20" y="13.72" width="12.90" height="1.3" fill="#6a9955"/><rect x="15.17" y="13.72" width="4.30" height="1.3" fill="#6a9955"/><rect x="20.55" y="13.72" width="1.07" height="1.3" fill="#6a9955"/><rect x="22.70" y="13.72" width="6.45" height="1.3" fill="#6a9955"/><rect x="30.23" y="13.72" width="5.38" height="1.3" fill="#6a9955"/><rect x="36.67" y="13.72" width="4.30" height="1.3" fill="#6a9955"/><rect x="42.05" y="13.72" width="2.15" height="1.3" fill="#6a9955"/><rect x="45.28" y="13.72" width="10.75" height="1.3" fill="#6a9955"/><rect x="1.20" y="15.86" width="8.60" height="1.3" fill="#6a9955"/><rect x="10.88" y="15.86" width="3.22" height="1.3" fill="#6a9955"/><rect x="1.20" y="18.00" width="7.52" height="1.3" fill="#6a9955"/><rect x="9.80" y="18.00" width="4.30" height="1.3" fill="#6a9955"/><rect x="15.17" y="18.00" width="4.30" height="1.3" fill="#6a9955"/><rect x="1.20" y="20.14" width="2.15" height="1.3" fill="#6a9955"/><rect x="1.20" y="22.28" width="10.75" height="1.3" fill="#dcdcaa"/><rect x="11.95" y="22.28" width="1.07" height="1.3" fill="#ffd700"/><rect x="13.03" y="22.28" width="12.90" height="1.3" fill="#ce9178"/><rect x="25.92" y="22.28" width="1.07" height="1.3" fill="#d4d4d4"/><rect x="28.08" y="22.28" width="23.65" height="1.3" fill="#ce9178"/><rect x="51.73" y="22.28" width="1.07" height="1.3" fill="#ffd700"/><rect x="52.80" y="22.28" width="1.07" height="1.3" fill="#d4d4d4"/><rect x="1.20" y="26.56" width="8.60" height="1.3" fill="#569cd6"/><rect x="10.88" y="26.56" width="21.50" height="1.3" fill="#dcdcaa"/><rect x="32.38" y="26.56" width="2.15" height="1.3" fill="#ffd700"/><rect x="35.60" y="26.56" width="1.07" height="1.3" fill="#ffd700"/><rect x="5.50" y="28.70" width="13.97" height="1.3" fill="#dcdcaa"/><rect x="19.48" y="28.70" width="1.07" height="1.3" fill="#da70d6"/><rect x="9.80" y="30.84" width="7.52" height="1.3" fill="#ce9178"/><rect x="18.40" y="30.84" width="4.30" height="1.3" fill="#ce9178"/><rect x="23.78" y="30.84" width="6.45" height="1.3" fill="#ce9178"/><rect x="30.23" y="30.84" width="1.07" height="1.3" fill="#d4d4d4"/><rect x="43.12" y="30.84" width="2.15" height="1.3" fill="#6a9955"/><rect x="46.35" y="30.84" width="4.30" height="1.3" fill="#6a9955"/><rect x="51.73" y="30.84" width="5.38" height="1.3" fill="#6a9955"/><rect x="9.80" y="32.98" width="7.52" height="1.3" fill="#ce9178"/><rect x="18.40" y="32.98" width="5.38" height="1.3" fill="#ce9178"/><rect x="23.78" y="32.98" width="1.07" height="1.3" fill="#d4d4d4"/><rect x="43.12" y="32.98" width="2.15" height="1.3" fill="#6a9955"/><rect x="46.35" y="32.98" width="4.30" height="1.3" fill="#6a9955"/><rect x="51.73" y="32.98" width="5.38" height="1.3" fill="#6a9955"/><rect x="9.80" y="35.12" width="17.20" height="1.3" fill="#ce9178"/><rect x="27.00" y="35.12" width="1.07" height="1.3" fill="#d4d4d4"/><rect x="43.12" y="35.12" width="2.15" height="1.3" fill="#6a9955"/><rect x="46.35" y="35.12" width="10.75" height="1.3" fill="#6a9955"/><rect x="9.80" y="37.26" width="20.43" height="1.3" fill="#ce9178"/><rect x="30.23" y="37.26" width="1.07" height="1.3" fill="#d4d4d4"/><rect x="43.12" y="37.26" width="2.15" height="1.3" fill="#6a9955"/><rect x="46.35" y="37.26" width="4.30" height="1.3" fill="#6a9955"/><rect x="51.73" y="37.26" width="4.30" height="1.3" fill="#6a9955"/><rect x="9.80" y="39.40" width="30.10" height="1.3" fill="#ce9178"/><rect x="39.90" y="39.40" width="1.07" height="1.3" fill="#d4d4d4"/><rect x="43.12" y="39.40" width="2.15" height="1.3" fill="#6a9955"/><rect x="46.35" y="39.40" width="8.60" height="1.3" fill="#6a9955"/><rect x="56.03" y="39.40" width="8.60" height="1.3" fill="#6a9955"/><rect x="9.80" y="41.54" width="19.35" height="1.3" fill="#ce9178"/><rect x="29.15" y="41.54" width="1.07" height="1.3" fill="#d4d4d4"/><rect x="35.60" y="41.54" width="2.15" height="1.3" fill="#6a9955"/><rect x="38.83" y="41.54" width="4.30" height="1.3" fill="#6a9955"/><rect x="44.20" y="41.54" width="3.22" height="1.3" fill="#6a9955"/><rect x="48.50" y="41.54" width="2.15" height="1.3" fill="#6a9955"/><rect x="51.73" y="41.54" width="8.60" height="1.3" fill="#6a9955"/><rect x="61.40" y="41.54" width="5.38" height="1.3" fill="#6a9955"/><rect x="9.80" y="43.68" width="1.07" height="1.3" fill="#b5cea8"/><rect x="43.12" y="43.68" width="2.15" height="1.3" fill="#6a9955"/><rect x="46.35" y="43.68" width="8.60" height="1.3" fill="#6a9955"/><rect x="56.03" y="43.68" width="2.15" height="1.3" fill="#6a9955"/><rect x="59.25" y="43.68" width="3.22" height="1.3" fill="#6a9955"/><rect x="63.55" y="43.68" width="4.30" height="1.3" fill="#6a9955"/><rect x="5.50" y="45.82" width="1.07" height="1.3" fill="#da70d6"/><rect x="6.58" y="45.82" width="1.07" height="1.3" fill="#d4d4d4"/><rect x="9.80" y="50.10" width="17.20" height="1.3" fill="#dcdcaa"/><rect x="27.00" y="50.10" width="1.07" height="1.3" fill="#da70d6"/><rect x="9.80" y="52.24" width="20.43" height="1.3" fill="#ce9178"/><rect x="30.23" y="52.24" width="1.07" height="1.3" fill="#d4d4d4"/><rect x="39.90" y="52.24" width="2.15" height="1.3" fill="#6a9955"/><rect x="43.12" y="52.24" width="6.45" height="1.3" fill="#6a9955"/><rect x="50.65" y="52.24" width="4.30" height="1.3" fill="#6a9955"/><rect x="9.80" y="54.38" width="8.60" height="1.3" fill="#ce9178"/><rect x="19.48" y="54.38" width="4.30" height="1.3" fill="#ce9178"/><rect x="24.85" y="54.38" width="6.45" height="1.3" fill="#ce9178"/><rect x="31.30" y="54.38" width="1.07" height="1.3" fill="#d4d4d4"/><rect x="39.90" y="54.38" width="2.15" height="1.3" fill="#6a9955"/><rect x="43.12" y="54.38" width="4.30" height="1.3" fill="#6a9955"/><rect x="48.50" y="54.38" width="5.38" height="1.3" fill="#6a9955"/><rect x="9.80" y="56.52" width="9.67" height="1.3" fill="#ce9178"/><rect x="19.48" y="56.52" width="1.07" height="1.3" fill="#d4d4d4"/><rect x="39.90" y="56.52" width="2.15" height="1.3" fill="#6a9955"/><rect x="43.12" y="56.52" width="7.52" height="1.3" fill="#6a9955"/><rect x="51.73" y="56.52" width="5.38" height="1.3" fill="#6a9955"/><rect x="9.80" y="58.66" width="17.20" height="1.3" fill="#ce9178"/><rect x="27.00" y="58.66" width="1.07" height="1.3" fill="#d4d4d4"/><rect x="39.90" y="58.66" width="2.15" height="1.3" fill="#6a9955"/><rect x="43.12" y="58.66" width="10.75" height="1.3" fill="#6a9955"/><rect x="9.80" y="60.80" width="17.20" height="1.3" fill="#ce9178"/><rect x="27.00" y="60.80" width="1.07" height="1.3" fill="#d4d4d4"/><rect x="39.90" y="60.80" width="2.15" height="1.3" fill="#6a9955"/><rect x="43.12" y="60.80" width="4.30" height="1.3" fill="#6a9955"/><rect x="48.50" y="60.80" width="4.30" height="1.3" fill="#6a9955"/><rect x="9.80" y="62.94" width="26.88" height="1.3" fill="#ce9178"/><rect x="39.90" y="62.94" width="2.15" height="1.3" fill="#6a9955"/><rect x="43.12" y="62.94" width="8.60" height="1.3" fill="#6a9955"/><rect x="52.80" y="62.94" width="8.60" height="1.3" fill="#6a9955"/><rect x="5.50" y="65.08" width="1.07" height="1.3" fill="#da70d6"/><rect x="6.58" y="65.08" width="1.07" height="1.3" fill="#d4d4d4"/><rect x="14.10" y="69.36" width="8.60" height="1.3" fill="#569cd6"/><rect x="23.78" y="69.36" width="24.72" height="1.3" fill="#dcdcaa"/><rect x="48.50" y="69.36" width="2.15" height="1.3" fill="#da70d6"/><rect x="51.73" y="69.36" width="1.07" height="1.3" fill="#da70d6"/><rect x="18.40" y="71.50" width="2.15" height="1.3" fill="#569cd6"/><rect x="18.40" y="73.64" width="1.07" height="1.3" fill="#808080"/><rect x="19.48" y="73.64" width="3.22" height="1.3" fill="#569cd6"/><rect x="23.78" y="73.64" width="5.38" height="1.3" fill="#9cdcfe"/><rect x="29.15" y="73.64" width="1.07" height="1.3" fill="#d4d4d4"/><rect x="30.23" y="73.64" width="6.45" height="1.3" fill="#ce9178"/><rect x="36.67" y="73.64" width="1.07" height="1.3" fill="#808080"/><rect x="22.70" y="75.78" width="1.07" height="1.3" fill="#808080"/><rect x="23.78" y="75.78" width="2.15" height="1.3" fill="#569cd6"/><rect x="25.92" y="75.78" width="1.07" height="1.3" fill="#808080"/><rect x="27.00" y="75.78" width="6.45" height="1.3" fill="#d4d4d4"/><rect x="34.53" y="75.78" width="7.52" height="1.3" fill="#d4d4d4"/><rect x="43.12" y="75.78" width="4.30" height="1.3" fill="#d4d4d4"/><rect x="47.42" y="75.78" width="2.15" height="1.3" fill="#808080"/><rect x="49.58" y="75.78" width="2.15" height="1.3" fill="#569cd6"/><rect x="51.73" y="75.78" width="1.07" height="1.3" fill="#808080"/><rect x="22.70" y="77.92" width="1.07" height="1.3" fill="#808080"/><rect x="23.78" y="77.92" width="1.07" height="1.3" fill="#569cd6"/><rect x="24.85" y="77.92" width="1.07" height="1.3" fill="#808080"/><rect x="25.92" y="77.92" width="4.30" height="1.3" fill="#d4d4d4"/><rect x="31.30" y="77.92" width="2.15" height="1.3" fill="#d4d4d4"/><rect x="34.53" y="77.92" width="3.22" height="1.3" fill="#d4d4d4"/><rect x="38.83" y="77.92" width="7.52" height="1.3" fill="#d4d4d4"/><rect x="47.42" y="77.92" width="3.22" height="1.3" fill="#d4d4d4"/><rect x="51.73" y="77.92" width="3.22" height="1.3" fill="#d4d4d4"/><rect x="56.03" y="77.92" width="7.52" height="1.3" fill="#d4d4d4"/><rect x="64.62" y="77.92" width="5.38" height="1.3" fill="#d4d4d4"/><rect x="70.00" y="77.92" width="2.15" height="1.3" fill="#808080"/><rect x="72.15" y="77.92" width="1.07" height="1.3" fill="#569cd6"/><rect x="73.23" y="77.92" width="1.07" height="1.3" fill="#808080"/><rect x="18.40" y="80.06" width="2.15" height="1.3" fill="#808080"/><rect x="20.55" y="80.06" width="3.22" height="1.3" fill="#569cd6"/><rect x="23.78" y="80.06" width="1.07" height="1.3" fill="#808080"/><rect x="18.40" y="82.20" width="5.38" height="1.3" fill="#569cd6"/><rect x="14.10" y="84.34" width="1.07" height="1.3" fill="#da70d6"/><rect x="1.20" y="88.62" width="1.07" height="1.3" fill="#ffd700"/><rect x="1.20" y="92.90" width="8.60" height="1.3" fill="#569cd6"/><rect x="10.88" y="92.90" width="27.95" height="1.3" fill="#dcdcaa"/><rect x="38.83" y="92.90" width="2.15" height="1.3" fill="#ffd700"/><rect x="42.05" y="92.90" width="1.07" height="1.3" fill="#ffd700"/><rect x="5.50" y="95.04" width="2.15" height="1.3" fill="#569cd6"/><rect x="5.50" y="97.18" width="1.07" height="1.3" fill="#808080"/><rect x="6.58" y="97.18" width="3.22" height="1.3" fill="#569cd6"/><rect x="10.88" y="97.18" width="5.38" height="1.3" fill="#9cdcfe"/><rect x="16.25" y="97.18" width="1.07" height="1.3" fill="#d4d4d4"/><rect x="17.33" y="97.18" width="6.45" height="1.3" fill="#ce9178"/><rect x="23.78" y="97.18" width="1.07" height="1.3" fill="#808080"/><rect x="9.80" y="99.32" width="1.07" height="1.3" fill="#808080"/><rect x="10.88" y="99.32" width="2.15" height="1.3" fill="#569cd6"/><rect x="13.03" y="99.32" width="1.07" height="1.3" fill="#808080"/><rect x="14.10" y="99.32" width="7.52" height="1.3" fill="#d4d4d4"/><rect x="22.70" y="99.32" width="2.15" height="1.3" fill="#d4d4d4"/><rect x="25.92" y="99.32" width="2.15" height="1.3" fill="#d4d4d4"/><rect x="29.15" y="99.32" width="6.45" height="1.3" fill="#d4d4d4"/><rect x="36.67" y="99.32" width="5.38" height="1.3" fill="#d4d4d4"/><rect x="43.12" y="99.32" width="5.38" height="1.3" fill="#d4d4d4"/><rect x="48.50" y="99.32" width="2.15" height="1.3" fill="#808080"/><rect x="50.65" y="99.32" width="2.15" height="1.3" fill="#569cd6"/><rect x="52.80" y="99.32" width="1.07" height="1.3" fill="#808080"/><rect x="9.80" y="101.46" width="1.07" height="1.3" fill="#808080"/><rect x="10.88" y="101.46" width="1.07" height="1.3" fill="#569cd6"/><rect x="11.95" y="101.46" width="1.07" height="1.3" fill="#808080"/><rect x="13.03" y="101.46" width="4.30" height="1.3" fill="#d4d4d4"/><rect x="18.40" y="101.46" width="2.15" height="1.3" fill="#d4d4d4"/><rect x="21.62" y="101.46" width="4.30" height="1.3" fill="#d4d4d4"/><rect x="27.00" y="101.46" width="6.45" height="1.3" fill="#d4d4d4"/><rect x="34.53" y="101.46" width="5.38" height="1.3" fill="#d4d4d4"/><rect x="40.98" y="101.46" width="4.30" height="1.3" fill="#d4d4d4"/><rect x="46.35" y="101.46" width="8.60" height="1.3" fill="#d4d4d4"/><rect x="54.95" y="101.46" width="2.15" height="1.3" fill="#808080"/><rect x="57.10" y="101.46" width="1.07" height="1.3" fill="#569cd6"/><rect x="58.17" y="101.46" width="1.07" height="1.3" fill="#808080"/><rect x="5.50" y="103.60" width="2.15" height="1.3" fill="#808080"/><rect x="7.65" y="103.60" width="3.22" height="1.3" fill="#569cd6"/><rect x="10.88" y="103.60" width="1.07" height="1.3" fill="#808080"/><rect x="5.50" y="105.74" width="5.38" height="1.3" fill="#569cd6"/><rect x="1.20" y="107.88" width="1.07" height="1.3" fill="#ffd700"/></g></svg>
<div class="a" style="left:1384.5px;top:107px;width:1px;height:760px;background:#262626;"></div>
<div class="a" style="left:1385px;top:250.5px;width:14px;height:2px;background:#8e8e8e;"></div>
<svg style="left:0px;top:0px" width="1400" height="856" viewBox="0 0 1400 856"><path fill="#ffdd00" d="M146 64.8 Q104 84 64.7 105.7 L63.2 88.3 L33 137.8 Q62 135.5 91.2 130.6 L75.6 122.6 Q112 94 146.2 66.2 Z"/><path fill="#ffdd00" d="M599.8 445.2 Q666 433 732.4 425.5 L721.7 410.7 L778.6 433 L725.5 462.9 L734.3 446.4 Q667 446.3 599.8 445.6 Z"/></svg></body></html>
